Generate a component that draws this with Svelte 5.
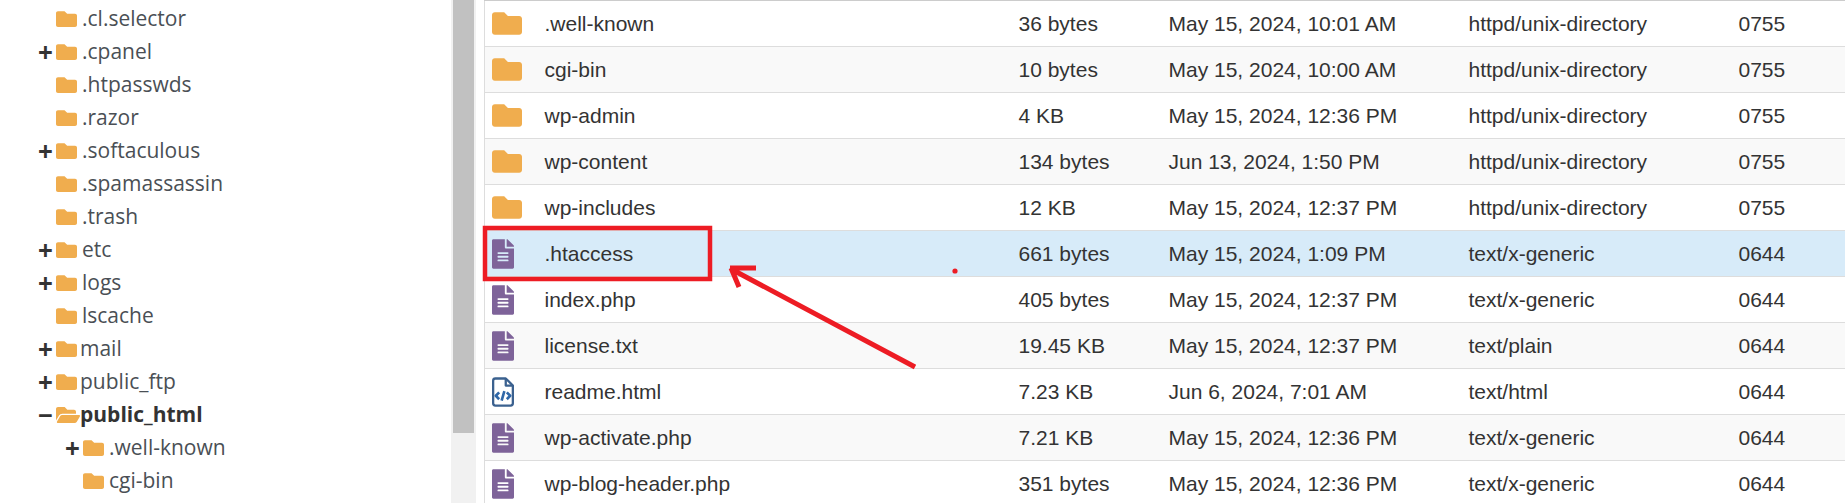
<script>
  // File manager view: directory tree on the left, file listing on the right

  const tree = [
    { name: '.cl.selector', depth: 0 },
    { name: '.cpanel', depth: 0, toggle: '+' },
    { name: '.htpasswds', depth: 0 },
    { name: '.razor', depth: 0 },
    { name: '.softaculous', depth: 0, toggle: '+' },
    { name: '.spamassassin', depth: 0 },
    { name: '.trash', depth: 0 },
    { name: 'etc', depth: 0, toggle: '+' },
    { name: 'logs', depth: 0, toggle: '+' },
    { name: 'lscache', depth: 0 },
    { name: 'mail', depth: 0, toggle: '+', tight: true },
    { name: 'public_ftp', depth: 0, toggle: '+', tight: true },
    { name: 'public_html', depth: 0, toggle: '−', open: true, tight: true },
    { name: '.well-known', depth: 1, toggle: '+' },
    { name: 'cgi-bin', depth: 1 }
  ];

  const dirType = 'httpd/unix-directory';
  const files = [
    { kind: 'folder', name: '.well-known', size: '36 bytes', date: 'May 15, 2024, 10:01 AM', type: dirType, perms: '0755' },
    { kind: 'folder', name: 'cgi-bin', size: '10 bytes', date: 'May 15, 2024, 10:00 AM', type: dirType, perms: '0755' },
    { kind: 'folder', name: 'wp-admin', size: '4 KB', date: 'May 15, 2024, 12:36 PM', type: dirType, perms: '0755' },
    { kind: 'folder', name: 'wp-content', size: '134 bytes', date: 'Jun 13, 2024, 1:50 PM', type: dirType, perms: '0755' },
    { kind: 'folder', name: 'wp-includes', size: '12 KB', date: 'May 15, 2024, 12:37 PM', type: dirType, perms: '0755' },
    { kind: 'text', name: '.htaccess', size: '661 bytes', date: 'May 15, 2024, 1:09 PM', type: 'text/x-generic', perms: '0644', selected: true },
    { kind: 'text', name: 'index.php', size: '405 bytes', date: 'May 15, 2024, 12:37 PM', type: 'text/x-generic', perms: '0644' },
    { kind: 'text', name: 'license.txt', size: '19.45 KB', date: 'May 15, 2024, 12:37 PM', type: 'text/plain', perms: '0644' },
    { kind: 'code', name: 'readme.html', size: '7.23 KB', date: 'Jun 6, 2024, 7:01 AM', type: 'text/html', perms: '0644' },
    { kind: 'text', name: 'wp-activate.php', size: '7.21 KB', date: 'May 15, 2024, 12:36 PM', type: 'text/x-generic', perms: '0644' },
    { kind: 'text', name: 'wp-blog-header.php', size: '351 bytes', date: 'May 15, 2024, 12:36 PM', type: 'text/x-generic', perms: '0644' }
  ];

  const folderPath = 'M464 128H272l-64-64H48C21.49 64 0 85.49 0 112v288c0 26.51 21.49 48 48 48h416c26.51 0 48-21.49 48-48V176c0-26.51-21.49-48-48-48z';
  const folderOpenPath = 'M572.694 292.093L500.27 416.248A63.997 63.997 0 0 1 444.989 448H45.025c-18.523 0-30.064-20.093-20.731-36.093l72.424-124.155A64 64 0 0 1 152 256h399.964c18.523 0 30.064 20.093 20.73 36.093zM152 224h328v-48c0-26.51-21.49-48-48-48H272l-64-64H48C21.49 64 0 85.49 0 112v278.046l69.077-118.418C86.214 242.25 117.989 224 152 224z';
  const filePath = 'M224 136V0H24C10.7 0 0 10.7 0 24v464c0 13.3 10.7 24 24 24h336c13.3 0 24-10.7 24-24V160H248c-13.2 0-24-10.8-24-24zm64 236c0 6.6-5.4 12-12 12H108c-6.6 0-12-5.4-12-12v-8c0-6.6 5.4-12 12-12h168c6.6 0 12 5.4 12 12v8zm0-64c0 6.6-5.4 12-12 12H108c-6.6 0-12-5.4-12-12v-8c0-6.6 5.4-12 12-12h168c6.6 0 12 5.4 12 12v8zm0-72v8c0 6.6-5.4 12-12 12H108c-6.6 0-12-5.4-12-12v-8c0-6.6 5.4-12 12-12h168c6.6 0 12 5.4 12 12zm96-114.1v6.1H256V0h6.1c6.4 0 12.5 2.5 17 7l97.9 98c4.5 4.5 7 10.6 7 16.9z';
</script>

<div class="manager">
  <nav class="tree">
    {#each tree as item}
      <div class="tree-row" class:nested={item.depth > 0} class:tight={item.tight} class:current={item.open}>
        <span class="toggle">{item.toggle ?? ''}</span>
        {#if item.open}
          <svg class="tree-folder open" viewBox="0 64 576 384"><path d={folderOpenPath} /></svg>
        {:else}
          <svg class="tree-folder" viewBox="0 64 512 384"><path d={folderPath} /></svg>
        {/if}
        <span class="tree-name">{item.name}</span>
      </div>
    {/each}
  </nav>

  <div class="scrollbar"><div class="thumb"></div></div>

  <div class="listing">
    <table>
      <colgroup>
        <col style="width: 60px" />
        <col style="width: 474px" />
        <col style="width: 150px" />
        <col style="width: 300px" />
        <col style="width: 270px" />
        <col />
      </colgroup>
      <tbody>
        {#each files as file}
          <tr class:selected={file.selected}>
            <td class="icon-cell">
              {#if file.kind === 'folder'}
                <svg class="ico-folder" viewBox="0 64 512 384"><path d={folderPath} /></svg>
              {:else if file.kind === 'text'}
                <svg class="ico-file" viewBox="0 0 384 512"><path d={filePath} /></svg>
              {:else}
                <svg class="ico-code" viewBox="0 0 384 512">
                  <path d="M240 20H60a40 40 0 0 0-40 40v392a40 40 0 0 0 40 40h264a40 40 0 0 0 40-40V144z" />
                  <path d="M240 20v124h124" />
                  <path class="glyph" d="M125 262l-58 60 58 60M259 262l58 60-58 60M216 240l-48 165" />
                </svg>
              {/if}
            </td>
            <td>{file.name}</td>
            <td>{file.size}</td>
            <td>{file.date}</td>
            <td>{file.type}</td>
            <td>{file.perms}</td>
          </tr>
        {/each}
      </tbody>
    </table>
  </div>

  <!-- screenshot annotation drawn over the page -->
  <svg class="annotation" viewBox="0 0 1845 503">
    <rect x="485" y="228" width="225" height="51" />
    <path d="M915 367L731 269M730 268H756M731 268L739 287" />
    <circle cx="955" cy="271" r="2.6" />
  </svg>
</div>

<style>
  :global(body) {
    background: #fff;
    overflow: hidden;
  }
  .manager {
    position: relative;
    display: flex;
    width: 1845px;
    height: 503px;
    overflow: hidden;
    background: #fff;
  }
  .tree {
    width: 451px;
    flex: none;
    padding-top: 2px;
    font-family: "Open Sans", sans-serif;
    font-size: 21px;
    color: #4a4f55;
  }
  .tree-row {
    display: flex;
    align-items: center;
    height: 33px;
    padding-left: 38px;
    white-space: nowrap;
  }
  .tree-row.nested {
    padding-left: 65px;
  }
  .toggle {
    width: 18px;
    flex: none;
    font-size: 26px;
    font-weight: 700;
    line-height: 1;
    color: #333;
  }
  .tree-folder {
    width: 21px;
    height: 16px;
    flex: none;
    fill: #f0ad4e;
  }
  .tree-folder.open {
    width: 24px;
  }
  .tree-name {
    margin-left: 5px;
    padding-bottom: 2px;
  }
  .tight .tree-name {
    margin-left: 3px;
  }
  .current .tree-name {
    margin-left: 0;
    font-weight: 700;
    color: #333;
  }
  .scrollbar {
    width: 25px;
    flex: none;
    padding: 0 2px;
    box-sizing: border-box;
    background: #f1f1f1;
  }
  .thumb {
    height: 433px;
    background: #c1c1c1;
  }
  .listing {
    flex: none;
    width: 1361px;
    margin-left: 8px;
  }
  table {
    width: 100%;
    table-layout: fixed;
    border-collapse: collapse;
    border-left: 1px solid #ddd;
    border-top: 1px solid #ccc;
    font-family: "Liberation Sans", Arial, sans-serif;
    font-size: 21px;
    color: #333;
  }
  td {
    height: 45px;
    padding: 0;
    border-bottom: 1px solid #ddd;
    white-space: nowrap;
  }
  tr:nth-child(even) {
    background: #f9f9f9;
  }
  tr.selected {
    background: #d7ebf9;
  }
  .icon-cell {
    padding-left: 7px;
    line-height: 0;
  }
  .ico-folder {
    width: 30px;
    height: 23px;
    fill: #f0ad4e;
  }
  .ico-file {
    width: 22px;
    height: 30px;
    fill: #7e6399;
  }
  .ico-code {
    width: 22px;
    height: 30px;
    fill: none;
    stroke: #3b618f;
    stroke-width: 40;
    stroke-linejoin: round;
  }
  .glyph {
    stroke: #2f67a8;
    stroke-width: 46;
  }
  .annotation {
    position: absolute;
    inset: 0;
    width: 1845px;
    height: 503px;
    fill: none;
    stroke: #ed1c24;
    pointer-events: none;
  }
  .annotation rect {
    stroke-width: 4.5;
  }
  .annotation path {
    stroke-width: 5;
  }
  .annotation circle {
    fill: #ed1c24;
    stroke: none;
  }
</style>
